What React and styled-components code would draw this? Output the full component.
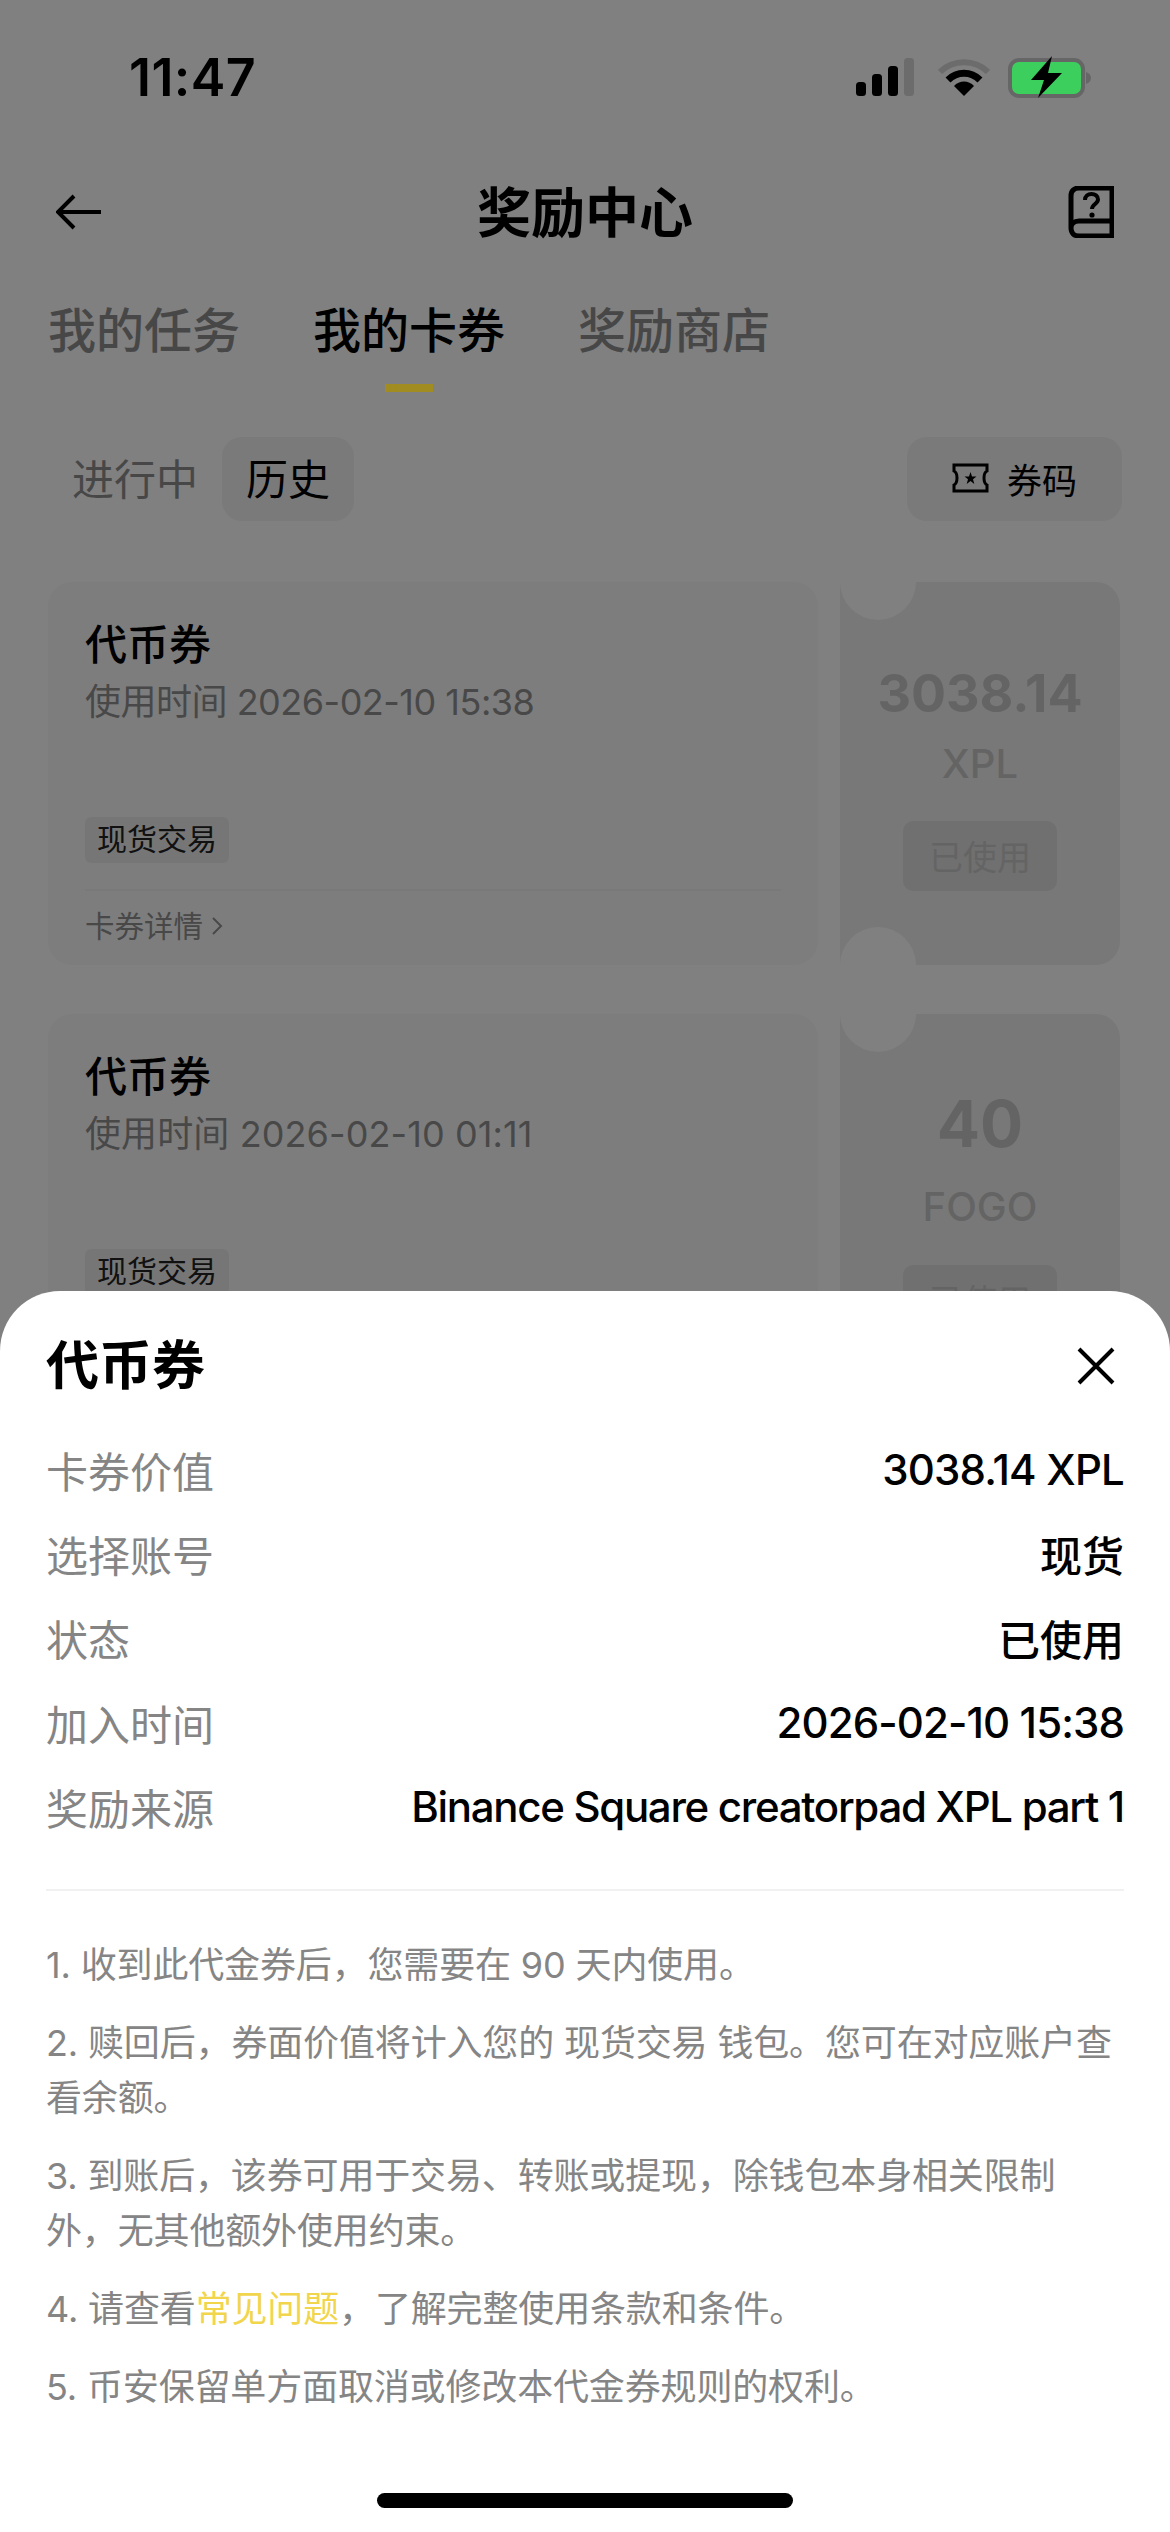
import styled, { createGlobalStyle } from 'styled-components';

const GlobalStyle = createGlobalStyle`
    html, body {
        margin: 0;
        padding: 0;
        background: #fff;
    }
    * {
        box-sizing: border-box;
    }
    body {
        font-family: Inter, "Noto Sans CJK SC", sans-serif;
        color: #000;
    }
`;

const Screen = styled.div`
    position: relative;
    width: 1170px;
    height: 2532px;
    overflow: hidden;
    background: #fff;
`;

const StatusBar = styled.div`
    position: relative;
    z-index: 2;
    height: 154px;
    padding: 0 78px 0 129px;
    display: flex;
    align-items: center;
    justify-content: space-between;
`;

const Time = styled.div`
    font-size: 52px;
    font-weight: 600;
    letter-spacing: 0.4px;
`;

const StatusIcons = styled.div`
    display: flex;
    align-items: center;
    gap: 18px;
`;

const NavBar = styled.div`
    height: 116px;
    padding: 0 56px;
    display: flex;
    align-items: center;
    justify-content: space-between;
`;

const NavTitle = styled.div`
    padding-bottom: 5px;
    font-size: 54px;
    font-weight: 700;
`;

const Tabs = styled.div`
    margin-top: 31px;
    padding: 0 48px;
    display: flex;
    gap: 73px;
`;

const Tab = styled.div`
    display: flex;
    flex-direction: column;
    align-items: center;
    font-size: 48px;
    line-height: 60px;
    font-weight: 500;
    color: ${(p) => (p.$active ? '#000' : '#8e8e8e')};
`;

const TabMark = styled.div`
    position: relative;
    z-index: 2;
    width: 48px;
    height: 8px;
    margin-top: 23px;
    background: ${(p) => (p.$active ? '#a08c20' : 'transparent')};
`;

const SubRow = styled.div`
    margin-top: 45px;
    padding: 0 48px;
    display: flex;
    align-items: center;
    justify-content: space-between;
`;

const SubTabs = styled.div`
    display: flex;
`;

const SubTab = styled.div`
    height: 84px;
    padding: 0 24px 6px;
    display: flex;
    align-items: center;
    border-radius: 20px;
    font-size: 42px;
    color: ${(p) => (p.$active ? '#000' : '#8e8e8e')};
    background: ${(p) => (p.$active ? '#f3f3f3' : 'transparent')};
`;

const CodeButton = styled.div`
    width: 215px;
    height: 84px;
    padding-bottom: 2px;
    display: flex;
    align-items: center;
    justify-content: center;
    gap: 18px;
    border-radius: 20px;
    background: #f3f3f3;
    font-size: 35px;
`;

const CardList = styled.div`
    margin-top: 61px;
    padding: 0 50px 0 48px;
    display: flex;
    flex-direction: column;
    gap: 49px;
`;

const Card = styled.div`
    position: relative;
    height: 383px;
    display: grid;
    grid-template-columns: 770px 280px;
    column-gap: 22px;

    &::before,
    &::after {
        content: '';
        position: absolute;
        left: 792px;
        width: 76px;
        height: 76px;
        border-radius: 50%;
        background: #fff;
    }
    &::before {
        top: -38px;
    }
    &::after {
        bottom: -38px;
    }
`;

const CardMain = styled.div`
    padding: 38px 37px 0;
    display: flex;
    flex-direction: column;
    border-radius: 24px;
    background: #fafafa;
`;

const CardTitle = styled.div`
    font-size: 42px;
    line-height: 50px;
    font-weight: 500;
`;

const UsedAt = styled.div`
    margin-top: 9px;
    font-size: 36px;
    line-height: 46px;
    letter-spacing: ${(p) => p.$tracking}px;
    color: #909090;
`;

const Tag = styled.div`
    align-self: flex-start;
    margin-top: 92px;
    height: 46px;
    padding: 0 12px 2px;
    display: flex;
    align-items: center;
    border-radius: 6px;
    background: #ececec;
    font-size: 30px;
    line-height: 40px;
    color: #222;
`;

const CardRule = styled.div`
    margin-top: 26px;
    height: 2px;
    background: #f2f2f2;
`;

const DetailLink = styled.div`
    margin-top: 16px;
    display: flex;
    align-items: center;
    gap: 8px;
    font-size: 29.5px;
    line-height: 38px;
    color: #909090;
`;

const CardValue = styled.div`
    padding-top: ${(p) => p.$top}px;
    display: flex;
    flex-direction: column;
    align-items: center;
    border-radius: 0 24px 24px 0;
    background: #f0f0f0;
    color: #c8c8c8;
`;

const Amount = styled.div`
    font-size: ${(p) => p.$size}px;
    line-height: 60px;
    font-weight: 700;
`;

const Unit = styled.div`
    margin-top: ${(p) => p.$gap}px;
    font-size: 40px;
    line-height: 50px;
    font-weight: 500;
`;

const UsedBadge = styled.div`
    margin-top: ${(p) => p.$gap}px;
    width: 154px;
    height: 70px;
    padding-bottom: 2px;
    display: flex;
    align-items: center;
    justify-content: center;
    border-radius: 10px;
    background: #e0e0e0;
    font-size: 34px;
`;

const Scrim = styled.div`
    position: absolute;
    inset: 0;
    z-index: 1;
    background: rgba(0, 0, 0, 0.498);
`;

const Sheet = styled.div`
    position: absolute;
    left: 0;
    right: 0;
    bottom: 0;
    z-index: 3;
    height: 1241px;
    padding: 45px 46px 0;
    border-radius: 60px 60px 0 0;
    background: #fff;
`;

const SheetHeader = styled.div`
    display: flex;
    align-items: center;
    justify-content: space-between;
    padding-right: 9px;
`;

const SheetTitle = styled.div`
    font-size: 53px;
    line-height: 60px;
    font-weight: 700;
`;

const InfoList = styled.div`
    margin-top: 31px;
`;

const InfoRow = styled.div`
    height: 84.4px;
    display: flex;
    align-items: center;
    justify-content: space-between;
    font-size: 42px;
`;

const InfoLabel = styled.div`
    color: #858585;
`;

const InfoValue = styled.div`
    font-weight: 500;
    letter-spacing: ${(p) => p.$tracking}px;
    color: #000;
`;

const SheetRule = styled.div`
    margin-top: 40px;
    height: 2px;
    background: #f1f1f1;
`;

const Notes = styled.div`
    margin-top: 47px;
    display: flex;
    flex-direction: column;
    gap: 23px;
`;

const Note = styled.p`
    margin: 0;
    font-size: 36px;
    line-height: 55px;
    letter-spacing: -0.15px;
    color: #858585;
`;

const NoteLink = styled.span`
    color: #f1d54c;
`;

const HomeBar = styled.div`
    position: absolute;
    left: 377px;
    bottom: 24px;
    width: 416px;
    height: 15px;
    border-radius: 8px;
    background: #000;
`;

const SignalIcon = () => (
    <svg width="64" height="38" viewBox="0 0 64 38">
        <rect x="0" y="24" width="10" height="14" rx="3.5" fill="#000" />
        <rect x="16" y="16" width="10" height="22" rx="3.5" fill="#000" />
        <rect x="32" y="8" width="10" height="30" rx="3.5" fill="#000" />
        <rect x="48" y="0" width="10" height="38" rx="3.5" fill="#6c6c6c" />
    </svg>
);

const WifiIcon = () => (
    <svg width="52" height="38" viewBox="0 0 52 38">
        <path d="M2 14C15 1 37 1 50 14" fill="none" stroke="#6c6c6c" strokeWidth="6" />
        <path d="M10 22C19 13 33 13 42 22" fill="none" stroke="#000" strokeWidth="7" />
        <path d="M26 38L16 28C21 22 31 22 36 28Z" fill="#000" />
    </svg>
);

const BatteryIcon = () => (
    <svg width="84" height="42" viewBox="0 0 84 42">
        <rect x="2" y="4" width="73" height="36" rx="9" fill="#3ccf5e" stroke="#666" strokeWidth="4" />
        <path d="M78 16C81 17 83 19 83 22C83 25 81 27 78 28Z" fill="#666" />
        <path d="M44 0L23 24H36L30 42L54 17H40Z" fill="#000" />
    </svg>
);

const BackIcon = () => (
    <svg width="46" height="36" viewBox="0 0 46 36">
        <path d="M45 18H3M18 2L2 18L18 34" fill="none" stroke="#000" strokeWidth="4" />
    </svg>
);

const GuideIcon = () => (
    <svg width="46" height="52" viewBox="0 0 46 52">
        <path
            d="M44 2H11C6 2 3 5 3 10V42C3 47 6 50 11 50H44V2ZM3 42C3 38 6 35 11 35H44"
            fill="none"
            stroke="#000"
            strokeWidth="5"
            strokeLinejoin="round"
        />
        <path
            d="M17 14C17 10 20 8 23.5 8C27 8 30 10 30 13.5C30 18 24 18 24 23"
            fill="none"
            stroke="#000"
            strokeWidth="4"
        />
        <circle cx="24" cy="29" r="2.6" fill="#000" />
    </svg>
);

const TicketIcon = () => (
    <svg width="37" height="30" viewBox="0 0 37 30">
        <path
            d="M2 2H35V8C31 10 31 20 35 22V28H2V22C6 20 6 10 2 8Z"
            fill="none"
            stroke="#000"
            strokeWidth="3"
        />
        <path d="M18.5 9L20 13.5H24.5L21 16.2L22.3 21L18.5 18L14.7 21L16 16.2L12.5 13.5H17Z" fill="#000" />
    </svg>
);

const ChevronIcon = () => (
    <svg width="12" height="22" viewBox="0 0 12 22">
        <path d="M2 3L10 11L2 19" fill="none" stroke="#909090" strokeWidth="2" />
    </svg>
);

const CloseIcon = () => (
    <svg width="38" height="38" viewBox="0 0 38 38">
        <path d="M2 2L36 36M36 2L2 36" fill="none" stroke="#000" strokeWidth="4" />
    </svg>
);

// the second card runs under the sheet, so its footer is never on screen
const coupons = [
    { time: '2026-02-10 15:38', tracking: -0.5, amount: '3038.14', unit: 'XPL', size: 52, top: 82, unitGap: 15, badgeGap: 32, footer: true },
    { time: '2026-02-10 01:11', tracking: 0.1, amount: '40', unit: 'FOGO', size: 64, top: 80, unitGap: 28, badgeGap: 33, footer: false },
];

const info = [
    ['卡券价值', '3038.14 XPL', -0.8],
    ['选择账号', '现货', 0],
    ['状态', '已使用', 0],
    ['加入时间', '2026-02-10 15:38', -0.9],
    ['奖励来源', 'Binance Square creatorpad XPL part 1', -1.3],
];

const App = () => {
    return (
        <Screen>
            <GlobalStyle />
            <StatusBar>
                <Time>11:47</Time>
                <StatusIcons>
                    <SignalIcon />
                    <WifiIcon />
                    <BatteryIcon />
                </StatusIcons>
            </StatusBar>

            <NavBar>
                <BackIcon />
                <NavTitle>奖励中心</NavTitle>
                <GuideIcon />
            </NavBar>

            <Tabs>
                <Tab>
                    我的任务
                    <TabMark />
                </Tab>
                <Tab $active>
                    我的卡券
                    <TabMark $active />
                </Tab>
                <Tab>
                    奖励商店
                    <TabMark />
                </Tab>
            </Tabs>

            <SubRow>
                <SubTabs>
                    <SubTab>进行中</SubTab>
                    <SubTab $active>历史</SubTab>
                </SubTabs>
                <CodeButton>
                    <TicketIcon />
                    券码
                </CodeButton>
            </SubRow>

            <CardList>
                {coupons.map((c) => (
                    <Card key={c.time}>
                        <CardMain>
                            <CardTitle>代币券</CardTitle>
                            <UsedAt $tracking={c.tracking}>使用时间 {c.time}</UsedAt>
                            <Tag>现货交易</Tag>
                            {c.footer && (
                                <>
                                    <CardRule />
                                    <DetailLink>
                                        卡券详情
                                        <ChevronIcon />
                                    </DetailLink>
                                </>
                            )}
                        </CardMain>
                        <CardValue $top={c.top}>
                            <Amount $size={c.size}>{c.amount}</Amount>
                            <Unit $gap={c.unitGap}>{c.unit}</Unit>
                            <UsedBadge $gap={c.badgeGap}>已使用</UsedBadge>
                        </CardValue>
                    </Card>
                ))}
            </CardList>

            <Scrim />

            <Sheet>
                <SheetHeader>
                    <SheetTitle>代币券</SheetTitle>
                    <CloseIcon />
                </SheetHeader>

                <InfoList>
                    {info.map(([label, value, tracking]) => (
                        <InfoRow key={label}>
                            <InfoLabel>{label}</InfoLabel>
                            <InfoValue $tracking={tracking}>{value}</InfoValue>
                        </InfoRow>
                    ))}
                </InfoList>

                <SheetRule />

                <Notes>
                    <Note>1. 收到此代金券后，您需要在 90 天内使用。</Note>
                    <Note>2. 赎回后，券面价值将计入您的 现货交易 钱包。您可在对应账户查看余额。</Note>
                    <Note>3. 到账后，该券可用于交易、转账或提现，除钱包本身相关限制外，无其他额外使用约束。</Note>
                    <Note>
                        4. 请查看<NoteLink>常见问题</NoteLink>，了解完整使用条款和条件。
                    </Note>
                    <Note>5. 币安保留单方面取消或修改本代金券规则的权利。</Note>
                </Notes>

                <HomeBar />
            </Sheet>
        </Screen>
    );
};

export default App;
